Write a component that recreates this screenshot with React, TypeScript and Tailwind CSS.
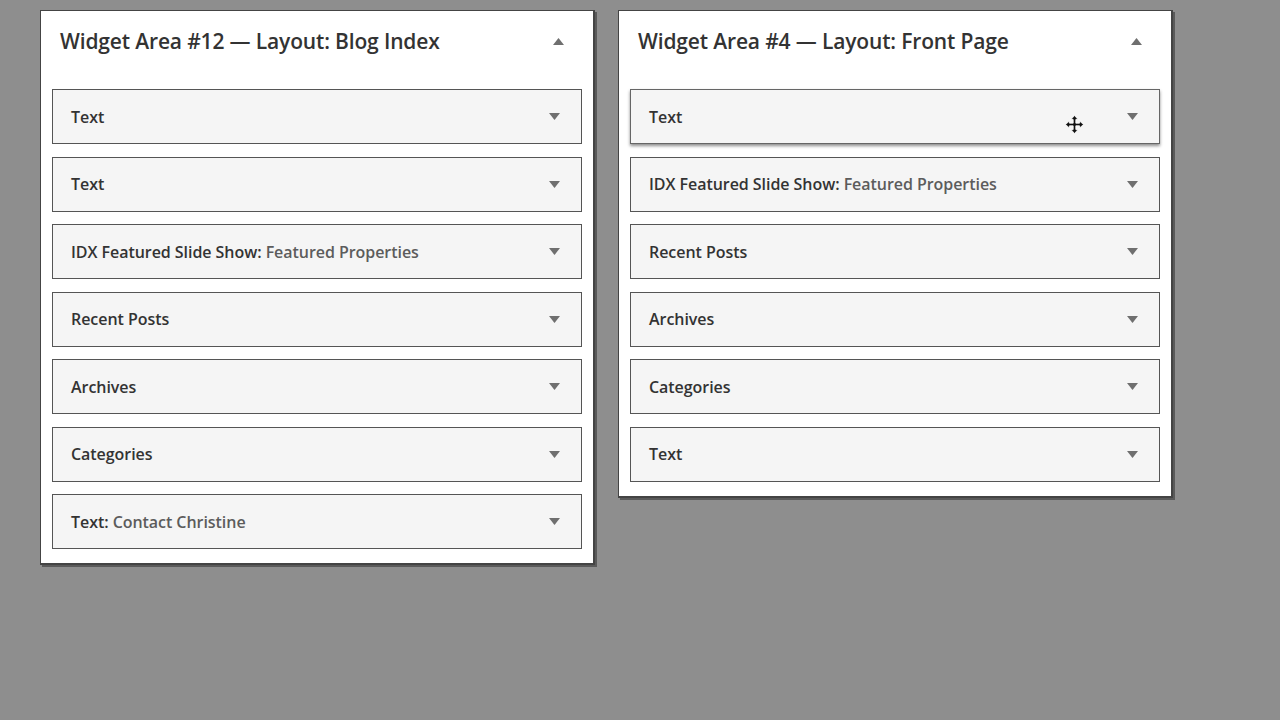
import React from 'react';

type Widget = { title: string; sub?: string };

const leftWidgets: Widget[] = [
  { title: 'Text' },
  { title: 'Text' },
  { title: 'IDX Featured Slide Show', sub: 'Featured Properties' },
  { title: 'Recent Posts' },
  { title: 'Archives' },
  { title: 'Categories' },
  { title: 'Text', sub: 'Contact Christine' },
];

const rightWidgets: Widget[] = [
  { title: 'Text' },
  { title: 'IDX Featured Slide Show', sub: 'Featured Properties' },
  { title: 'Recent Posts' },
  { title: 'Archives' },
  { title: 'Categories' },
  { title: 'Text' },
];

const Arrow = ({ up }: { up?: boolean }) => (
  <svg width="11" height="7" viewBox="0 0 11 7" className="shrink-0">
    {up ? <polygon points="5.5,0 11,7 0,7" fill="#6f6f6f" /> : <polygon points="0,0 11,0 5.5,7" fill="#6f6f6f" />}
  </svg>
);

// four-way move cursor
const MoveCursor = () => (
  <svg width="19" height="19" viewBox="0 0 19 19">
    <path
      d="M9.5 0.5 L13 4.5 L10.8 4.5 L10.8 8.2 L14.5 8.2 L14.5 6 L18.5 9.5 L14.5 13 L14.5 10.8 L10.8 10.8 L10.8 14.5 L13 14.5 L9.5 18.5 L6 14.5 L8.2 14.5 L8.2 10.8 L4.5 10.8 L4.5 13 L0.5 9.5 L4.5 6 L4.5 8.2 L8.2 8.2 L8.2 4.5 L6 4.5 Z"
      fill="#111"
      stroke="#fff"
      strokeWidth="0.8"
    />
  </svg>
);

const WidgetRow = ({ w, dragging }: { w: Widget; dragging?: boolean }) => (
  <div
    className={`relative h-[55px] flex items-center justify-between pl-[18px] pr-[21px] bg-[#f5f5f5] border border-[#555] ${
      dragging ? 'shadow-[0_2px_3px_rgba(0,0,0,0.45)] border-[#666]' : ''
    }`}
  >
    <span className="text-[16px] font-semibold text-[#333] tracking-[-0.05px] leading-none">
      {w.title}
      {w.sub && (
        <>
          : <span className="text-[#5c5c5c]">{w.sub}</span>
        </>
      )}
    </span>
    <Arrow />
    {dragging && (
      <div className="absolute left-[434px] top-[25px]">
        <MoveCursor />
      </div>
    )}
  </div>
);

const WidgetArea = ({ title, widgets, dragFirst }: { title: string; widgets: Widget[]; dragFirst?: boolean }) => (
  <div className="w-[555px] bg-white border border-[#444] border-r-2 border-b-2 shadow-[2px_2px_0_#5a5a5a]">
    <div className="h-[78px] flex items-center justify-between pl-[19px] pr-[29px] pb-[18px]">
      <h3 className="text-[21px] font-semibold text-[#333] tracking-[-0.15px] leading-none">{title}</h3>
      <Arrow up />
    </div>
    <div className="flex flex-col gap-[12.5px] px-[11px] pb-[14px]">
      {widgets.map((w, i) => (
        <WidgetRow key={i} w={w} dragging={dragFirst && i === 0} />
      ))}
    </div>
  </div>
);

export default function App() {
  return (
    <div className="w-[1280px] h-[720px] bg-[#8e8e8e] overflow-hidden" style={{ fontFamily: '"Open Sans", "Noto Sans", sans-serif' }}>
      <div className="flex items-start gap-[23px] pl-[40px] pt-[10px]">
        <WidgetArea title="Widget Area #12 — Layout: Blog Index" widgets={leftWidgets} />
        <WidgetArea title="Widget Area #4 — Layout: Front Page" widgets={rightWidgets} dragFirst />
      </div>
    </div>
  );
}
